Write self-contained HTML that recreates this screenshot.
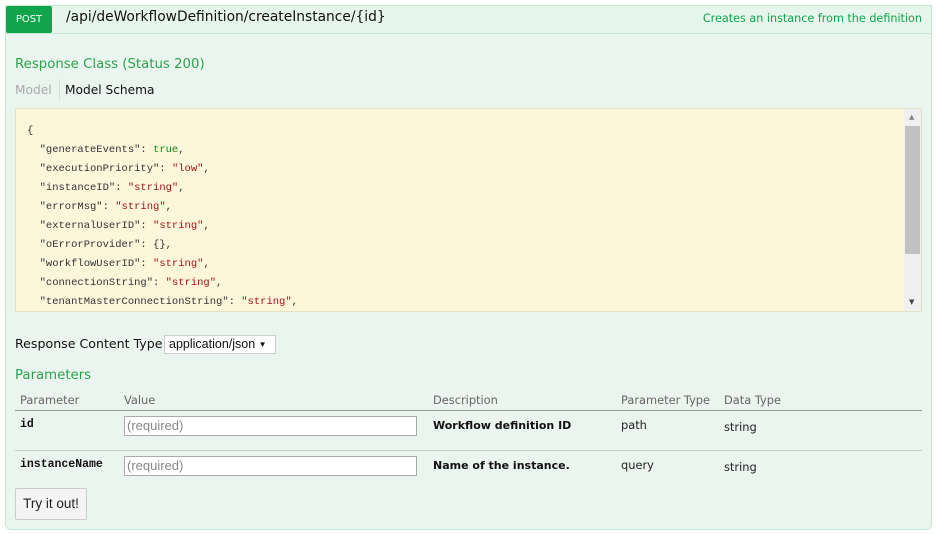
<!DOCTYPE html>
<html><head><style>
*{box-sizing:border-box;margin:0;padding:0}
body{width:936px;height:534px;background:#fff;font-family:"DejaVu Sans","Liberation Sans",sans-serif;position:relative;overflow:hidden}
.abs{position:absolute;white-space:nowrap}
.outer{left:5px;top:5px;width:927px;height:525px;background:#ebf5ef;border:1px solid #c3e8d1;border-radius:0 0 6px 6px}
.head{left:5px;top:5px;width:927px;height:29px;background:#e7f6ec;border:1px solid #c3e8d1}
.post{left:6px;top:6px;width:46px;height:27px;background:#10a54a;color:#fff;font-size:10px;line-height:27px;text-align:center;border-radius:2px}
.path{left:66px;top:9px;font-size:13.8px;color:#111}
.desc{right:14px;top:12px;font-size:11.2px;color:#10a54a}
.green{color:#2fa14f;font-size:13.3px}
.code{left:15px;top:108px;width:907px;height:204px;background:#fcf6db;border:1px solid #e5e0c6;font-family:"Liberation Mono",monospace;font-size:10.5px;line-height:19px;color:#333;padding:13px 0 0 11px;white-space:pre;overflow:hidden}
.s{color:#a31515}.t{color:#0b8a0b}
.sb{left:904px;top:109px;width:17px;height:202px;background:#f0f0f0}
.thumb{left:905px;top:126px;width:15px;height:128px;background:#c1c1c1}
.th{top:393px;font-size:11.4px;color:#666}
.td{font-size:11.4px;color:#222}
.mono{font-family:"Liberation Mono",monospace;font-weight:bold;font-size:11.5px;color:#111}
.bd{font-weight:bold;font-size:11px;color:#111}
.inp{left:124px;width:293px;height:20px;background:#fff;border:1px solid #aaa;font-family:"Liberation Sans",sans-serif;font-size:13px;color:#888;padding:2px 2px;line-height:14px}
.line{left:15px;width:907px;height:1px}
</style></head><body>
<div class="abs outer"></div>
<div class="abs head"></div>
<div class="abs post">POST</div>
<div class="abs path">/api/deWorkflowDefinition/createInstance/{id}</div>
<div class="abs desc">Creates an instance from the definition</div>
<div class="abs green" style="left:15px;top:57px">Response Class (Status 200)</div>
<div class="abs" style="left:15px;top:83px;font-size:12.2px;color:#aaa">Model</div>
<div class="abs" style="left:59px;top:79px;width:1px;height:22px;background:#ddd"></div>
<div class="abs" style="left:65px;top:83px;font-size:12.2px;color:#111">Model Schema</div>
<div class="abs code">{
  "generateEvents": <span class="t">true</span>,
  "executionPriority": <span class="s">"low"</span>,
  "instanceID": <span class="s">"string"</span>,
  "errorMsg": <span class="s">"string"</span>,
  "externalUserID": <span class="s">"string"</span>,
  "oErrorProvider": {},
  "workflowUserID": <span class="s">"string"</span>,
  "connectionString": <span class="s">"string"</span>,
  "tenantMasterConnectionString": <span class="s">"string"</span>,</div>
<div class="abs sb"></div>
<div class="abs thumb"></div>
<div class="abs" style="left:909px;top:113px;font-size:7px;color:#888">▲</div>
<div class="abs" style="left:909px;top:298px;font-size:7px;color:#444">▼</div>
<div class="abs" style="left:15px;top:336px;font-size:12.6px;color:#111">Response Content Type</div>
<div class="abs" style="left:164px;top:335px;width:112px;height:19px;background:#fff;border:1px solid #ccc;font-family:'Liberation Sans',sans-serif;font-size:12.5px;padding:1px 4px;color:#111;line-height:15px">application/json <span style="font-size:8px;vertical-align:1px">▼</span></div>
<div class="abs green" style="left:15px;top:368px">Parameters</div>
<div class="abs th" style="left:20px">Parameter</div>
<div class="abs th" style="left:124px">Value</div>
<div class="abs th" style="left:433px">Description</div>
<div class="abs th" style="left:621px">Parameter Type</div>
<div class="abs th" style="left:724px">Data Type</div>
<div class="abs line" style="top:410px;background:#999"></div>
<div class="abs mono" style="left:20px;top:418px">id</div>
<div class="abs inp" style="top:416px">(required)</div>
<div class="abs bd" style="left:433px;top:419px">Workflow definition ID</div>
<div class="abs td" style="left:621px;top:418px">path</div>
<div class="abs td" style="left:724px;top:420px">string</div>
<div class="abs line" style="top:450px;background:#ccc"></div>
<div class="abs mono" style="left:20px;top:458px">instanceName</div>
<div class="abs inp" style="top:456px">(required)</div>
<div class="abs bd" style="left:433px;top:459px">Name of the instance.</div>
<div class="abs td" style="left:621px;top:458px">query</div>
<div class="abs td" style="left:724px;top:460px">string</div>
<div class="abs" style="left:15px;top:488px;width:72px;height:32px;background:#f4f4f4;border:1px solid #ccc;border-radius:2px;font-family:'Liberation Sans',sans-serif;font-size:13.5px;color:#222;text-align:center;line-height:30px">Try it out!</div>
</body></html>
